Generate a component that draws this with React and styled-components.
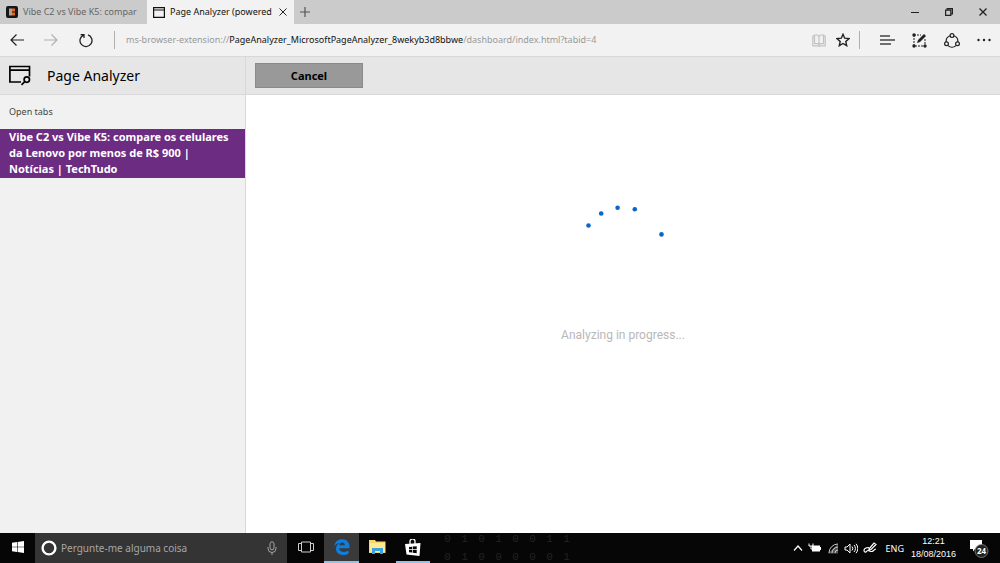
import React from "react";
import styled, { createGlobalStyle } from "styled-components";

const GlobalStyle = createGlobalStyle`
  * { box-sizing: border-box; }
  body { margin: 0; font-family: "Noto Sans", "Open Sans", sans-serif; color: #000; background: #fff; }
  button, input { font-family: inherit; margin: 0; border: 0; padding: 0; background: none; color: inherit; }
  svg { display: block; flex: none; }
`;

const Screen = styled.div`
  display: flex;
  flex-direction: column;
  min-height: 100vh;
`;

const TitleBar = styled.header`
  display: flex;
  height: 24px;
  background: #cbcbcb;
`;

const Tab = styled.div`
  display: flex;
  align-items: center;
  flex: none;
  width: 147px;
  padding: 0 6px;
  gap: 5px;
  background: ${(p) => (p.$active ? "#f2f2f2" : "transparent")};
  color: ${(p) => (p.$active ? "#111" : "#666")};
`;

const TabTitle = styled.span`
  flex: 1;
  white-space: nowrap;
  font-size: 9px;
  line-height: 16px;
`;

const IconButton = styled.button`
  display: flex;
  flex: none;
  align-items: center;
  justify-content: center;
  width: ${(p) => p.$w || 34}px;
  color: ${(p) => p.$color || "#222"};
`;

const Spacer = styled.div`
  flex: 1;
`;

const AddressBar = styled.nav`
  display: flex;
  align-items: center;
  height: 32px;
  padding-right: 8px;
  background: #f2f2f2;
`;

const Divider = styled.div`
  flex: none;
  width: 1px;
  height: 18px;
  margin: 0 ${(p) => p.$gap}px;
  background: #b0b0b0;
`;

const Address = styled.div`
  flex: 1;
  min-width: 0;
  white-space: nowrap;
  font-size: 9px;
  line-height: 16px;
  color: #999;
`;

const Host = styled.span`
  color: #111;
`;

const Page = styled.div`
  display: flex;
  flex: 1;
`;

const Sidebar = styled.aside`
  flex: none;
  width: 246px;
  border-right: 1px solid #d8d8d8;
  background: #f1f1f1;
`;

const PageBar = styled.div`
  display: flex;
  align-items: center;
  height: 39px;
  padding: 0 9px;
  gap: 16px;
  border-top: 1px solid #d8d8d8;
  border-bottom: 1px solid #d8d8d8;
  background: #e6e6e6;
`;

const Brand = styled.h1`
  margin: 0;
  font-size: 14px;
  line-height: 20px;
  font-weight: 400;
`;

const SectionLabel = styled.h2`
  margin: 0;
  padding: 9px 9px;
  font-size: 9px;
  line-height: 16px;
  font-weight: 400;
  color: #444;
`;

const OpenTab = styled.button`
  display: block;
  width: 100%;
  padding: 0 9px 1px;
  background: #6b2c82;
  color: #fff;
  font-size: 11px;
  line-height: 16px;
  font-weight: 700;
  text-align: left;
`;

const Main = styled.main`
  flex: 1;
  min-width: 0;
`;

const CancelButton = styled.button`
  width: 108px;
  height: 25px;
  background: #999;
  outline: 1px solid #8a8a8a;
  outline-offset: -1px;
  font-size: 11px;
  line-height: 16px;
  font-weight: 700;
`;

const Progress = styled.div`
  display: flex;
  flex-direction: column;
  align-items: center;
  padding-top: 110px;
  gap: 41px;
`;

const ProgressText = styled.p`
  margin: 0;
  font-family: Roboto, sans-serif;
  font-size: 12px;
  line-height: 18px;
  font-weight: 400;
  color: #b8b8b8;
`;

const Taskbar = styled.footer`
  display: flex;
  height: 30px;
  background: #060606;
  color: #fff;
`;

const Search = styled.label`
  display: flex;
  flex: none;
  align-items: center;
  width: 252px;
  padding: 0 10px 0 6px;
  gap: 4px;
  background: #343434;
`;

const SearchInput = styled.input`
  flex: 1;
  min-width: 0;
  outline: none;
  font-size: 10px;
  line-height: 16px;
  &::placeholder { color: #a6a6a6; opacity: 1; }
`;

const TaskButton = styled.button`
  display: flex;
  flex: none;
  align-items: center;
  justify-content: center;
  width: ${(p) => p.$w || 36}px;
  background: ${(p) => (p.$active ? "#3a3a3a" : "transparent")};
  border-bottom: 2px solid ${(p) => (p.$open ? "#8fc4e8" : "transparent")};
`;

const Bits = styled.div`
  display: grid;
  flex: none;
  grid-template-columns: repeat(8, 17px);
  align-content: space-between;
  margin-left: 9px;
  font-family: "Liberation Mono", monospace;
  font-size: 11px;
  line-height: 12px;
  text-align: center;
  color: #222;
`;

const Tray = styled.div`
  display: flex;
  align-items: center;
  gap: 5px;
  padding-right: 11px;
  font-size: 9px;
  line-height: 13px;
`;

const Language = styled.span`
  margin: 0 2px 0 4px;
`;

const Clock = styled.time`
  margin-right: 8px;
  font-family: "Liberation Sans", sans-serif;
  text-align: center;
`;

const Stroke = ({ w, h, sw = 1.2, children, ...rest }) => (
  <svg width={w} height={h} viewBox={`0 0 ${w} ${h}`} fill="none" stroke="currentColor" strokeWidth={sw} aria-hidden="true" {...rest}>
    {children}
  </svg>
);

const bits = "0101001101000001".split("");

const dots = [[7.5, 20.5], [20.2, 8.5], [36.6, 2.8], [53.8, 4.2], [80.5, 29.4]];

export default function App() {
  return (
    <Screen>
      <GlobalStyle />
      <TitleBar>
        <Tab>
          <svg width="12" height="12" viewBox="0 0 12 12" aria-hidden="true">
            <rect width="12" height="12" rx="2" fill="#171717" />
            <path d="M3 2.500h3v7H3z" fill="#a9a39d" />
            <path d="M6 2.500h3v3H6zM6 6.500h3v3H6z" fill="#e06a22" />
          </svg>
          <TabTitle>Vibe C2 vs Vibe K5: compar</TabTitle>
        </Tab>
        <Tab $active>
          <Stroke w={12} h={11}><path d="M.6.6h10.8v9.8H.6zM.6 3h10.8" /></Stroke>
          <TabTitle>Page Analyzer (powered</TabTitle>
          <IconButton $w={10} aria-label="Close tab">
            <Stroke w={8} h={8} sw={1}><path d="M.5.5l7 7M7.5.5l-7 7" /></Stroke>
          </IconButton>
        </Tab>
        <IconButton $w={22} $color="#555" aria-label="New tab">
          <Stroke w={10} h={10}><path d="M5 0v10M0 5h10" /></Stroke>
        </IconButton>
        <Spacer />
        <IconButton aria-label="Minimize"><Stroke w={8} h={8} sw={1}><path d="M0 4.500h8" /></Stroke></IconButton>
        <IconButton aria-label="Restore"><Stroke w={8} h={8} sw={1.2}><path d="M.6 2.200h5.200v5.200H.6zM2.200 2V.6h5.200v5.200H6" /></Stroke></IconButton>
        <IconButton aria-label="Close"><Stroke w={8} h={8} sw={1.3}><path d="M.5.5l7 7M7.500.5l-7 7" /></Stroke></IconButton>
      </TitleBar>

      <AddressBar>
        <IconButton $w={33} aria-label="Back"><Stroke w={14} h={12}><path d="M14 6H1M6.500.5L1 6l5.500 5.500" /></Stroke></IconButton>
        <IconButton $w={36} $color="#b0b0b0" aria-label="Forward"><Stroke w={14} h={12}><path d="M0 6h13M7.500.5L13 6l-5.500 5.500" /></Stroke></IconButton>
        <IconButton $w={34} aria-label="Refresh">
          <Stroke w={14} h={15} sw={1.3}><path d="M9 1.900a6 6 0 1 1-4.500.2M5 5V1.600H1.600" /></Stroke>
        </IconButton>
        <Divider $gap={11} />
        <Address>
          ms-browser-extension://<Host>PageAnalyzer_MicrosoftPageAnalyzer_8wekyb3d8bbwe</Host>/dashboard/index.html?tabid=4
        </Address>
        <IconButton $w={24} $color="#c2c2c2" aria-label="Reading view">
          <Stroke w={14} h={13} sw={1.2}><path d="M7 2.500v7.500M2.500 2.200H.8v9.600h5L7 12.600l1.200-.8h5V2.200h-1.700M2.500 1h3L7 2.500 8.500 1h3v8.700h-3L7 10.700 5.500 9.700h-3z" /></Stroke>
        </IconButton>
        <IconButton $w={24} aria-label="Favorites">
          <Stroke w={14} h={14} sw={1.4}><path d="M7 1.300l1.700 3.900 4.300.4-3.200 2.900.9 4.200L7 10.500l-3.700 2.200.9-4.200L1 5.600l4.300-.4z" /></Stroke>
        </IconButton>
        <Divider $gap={4} />
        <IconButton $w={46} $color="#444" aria-label="Hub"><Stroke w={15} h={10} sw={1.3}><path d="M0 1h10M0 5h15M0 9h11" /></Stroke></IconButton>
        <IconButton $w={18} aria-label="Web note">
          <Stroke w={15} h={15} sw={1}>
            <path d="M2 2h7M2 2v11h11V6" strokeDasharray="2 1" />
            <path d="M5 10l1-3 6-6 2 2-6 6z" fill="currentColor" stroke="none" />
            <circle cx="2" cy="2" r="1.700" fill="currentColor" stroke="none" />
            <circle cx="2" cy="13" r="1.700" fill="currentColor" stroke="none" />
            <circle cx="13" cy="13" r="1.700" fill="currentColor" stroke="none" />
          </Stroke>
        </IconButton>
        <IconButton $w={48} aria-label="Share">
          <Stroke w={16} h={15}>
            <circle cx="8" cy="2.500" r="1.900" /><circle cx="2.500" cy="10.800" r="1.900" /><circle cx="13.500" cy="10.800" r="1.900" />
            <path d="M6.200 2.800a5.800 5.800 0 0 0-4 6.200M9.800 2.800a5.800 5.800 0 0 1 4 6.200M4 12.600a6 6 0 0 0 8 0" />
          </Stroke>
        </IconButton>
        <IconButton $w={16} aria-label="More">
          <svg width="14" height="4" viewBox="0 0 14 4" fill="currentColor" aria-hidden="true"><circle cx="1.500" cy="2" r="1.200" /><circle cx="7" cy="2" r="1.200" /><circle cx="12.500" cy="2" r="1.200" /></svg>
        </IconButton>
      </AddressBar>

      <Page>
        <Sidebar>
          <PageBar>
            <Stroke w={22} h={21} sw={1.7}>
              <path d="M12 17H.9V1.500h19.600v10M.9 5.200h19.600" />
              <circle cx="17.800" cy="14.600" r="2.700" /><path d="M15.800 16.600l-3.300 3.300" />
            </Stroke>
            <Brand>Page Analyzer</Brand>
          </PageBar>
          <SectionLabel>Open tabs</SectionLabel>
          <OpenTab>Vibe C2 vs Vibe K5: compare os celulares da Lenovo por menos de R$ 900 | Notícias | TechTudo</OpenTab>
        </Sidebar>
        <Main>
          <PageBar>
            <CancelButton>Cancel</CancelButton>
          </PageBar>
          <Progress role="status">
            <svg width="84" height="80" viewBox="0 0 84 80" fill="#0a66cc" aria-hidden="true">
              {dots.map(([x, y]) => <circle key={x} cx={x} cy={y} r="2.300" />)}
            </svg>
            <ProgressText>Analyzing in progress...</ProgressText>
          </Progress>
        </Main>
      </Page>

      <Taskbar>
        <TaskButton $w={35} aria-label="Start">
          <svg width="12" height="12" viewBox="0 0 12 12" fill="#fff" aria-hidden="true"><path d="M0 1.700l5-.7v4.700H0zM5.600.9L12 0v5.700H5.600zM0 6.300h5V11l-5-.7zM5.600 6.300H12V12l-6.400-.9z" /></svg>
        </TaskButton>
        <Search>
          <Stroke w={16} h={16} sw={2.400} stroke="#fff"><circle cx="8" cy="8" r="6.400" /></Stroke>
          <SearchInput placeholder="Pergunte-me alguma coisa" aria-label="Pergunte-me alguma coisa" />
          <Stroke w={10} h={14} sw={1} stroke="#a6a6a6"><rect x="3" y=".8" width="4" height="8" rx="2" /><path d="M1 6v1.500a4 4 0 0 0 8 0V6M5 11.500V14" /></Stroke>
        </Search>
        <TaskButton $w={37} aria-label="Task view">
          <Stroke w={16} h={12} sw={1} stroke="#ccc"><path d="M3.500 1h9v10h-9zM3.500 2.500h-3v7h3M12.500 2.500h3v7h-3" /></Stroke>
        </TaskButton>
        <TaskButton $w={35} $active $open aria-label="Edge">
          <svg width="16" height="16" viewBox="0 0 16 16" fill="#0c7fe0" aria-hidden="true"><path d="M.3 7.200C.9 2.800 4 .2 8.100.2c4.700 0 7.500 3.300 7.500 7.600v1.400H5.200c.1 2.500 2.200 3.700 4.700 3.700 1.800 0 3.400-.5 4.600-1.300v3.200c-1.500.8-3.300 1.200-5.200 1.200C5 16 2 13.500 2 9.700 2 7.200 3.400 5.100 5.700 4 3.400 4.200 1.400 5.500.3 7.200zm5-.9h5.600c0-1.900-1-2.900-2.700-2.900S5.500 4.600 5.300 6.300z" /></svg>
        </TaskButton>
        <TaskButton $w={37} aria-label="File Explorer">
          <svg width="17" height="14" viewBox="0 0 17 14" aria-hidden="true"><path d="M0 0h6l1 1.500h9.500V13H0z" fill="#f7d66b" /><path d="M1 3h15v9H1z" fill="#ffe893" /><path d="M3 8h11v6h-3v-3H6v3H3z" fill="#36a3dc" /></svg>
        </TaskButton>
        <TaskButton $w={34} $open aria-label="Store">
          <svg width="16" height="17" viewBox="0 0 16 17" aria-hidden="true"><path d="M5 5V3a2.500 2.500 0 0 1 5-1v3" fill="none" stroke="#fff" strokeWidth="1.300" /><path d="M0 5l15.500-1-1 13L1.500 15.500z" fill="#fff" /><path d="M4 8l3-.3v2.500H4zM7.700 7.600l4-.4v3h-4zM4 11h3v2.600l-3-.3zM7.700 11h4v3.200l-4-.5z" fill="#060606" /></svg>
        </TaskButton>
        <Bits aria-hidden="true">{bits.map((b, i) => <span key={i}>{b}</span>)}</Bits>
        <Spacer />
        <Tray>
          <Stroke w={10} h={6}><path d="M1 5.500L5 1l4 4.500" /></Stroke>
          <svg width="14" height="10" viewBox="0 0 14 10" aria-hidden="true"><path d="M4 2.500h8v1.500h1v3h-1v1.500H4z" fill="#fff" /><path d="M1 .5v2.500h4V.5M3 3v3h2" fill="none" stroke="#fff" /></svg>
          <svg width="12" height="11" viewBox="0 0 12 11" aria-hidden="true"><path d="M1 10.500L11 1v9.500z" fill="#555" /><path d="M2 10a9 9 0 0 1 9-9M5 10a6 6 0 0 1 6-6M8 10a3 3 0 0 1 3-3" fill="none" stroke="#ccc" /></svg>
          <Stroke w={14} h={11} sw={1}><path d="M1 4h2l3-3v9L3 7H1zM8 3.500a3 3 0 0 1 0 4M10 2a5 5 0 0 1 0 7M12 .8a7 7 0 0 1 0 9.400" /></Stroke>
          <Stroke w={14} h={12}><path d="M6 7l5-6 2 1.500-5 5-2 .500zM6 5.500C2 5.500 1 7 1 8.500S3 11 4 9s4 2 6 0 3-2 3-2" /></Stroke>
          <Language>ENG</Language>
          <Clock>12:21<br />18/08/2016</Clock>
          <svg width="20" height="19" viewBox="0 0 20 19" aria-hidden="true">
            <path d="M1 1h12v9H6l-2 2.500V10H1z" fill="#fff" />
            <circle cx="12.500" cy="12" r="6.500" fill="#222" stroke="#888" strokeWidth=".8" />
            <text x="12.500" y="15" fontSize="8" fontWeight="700" textAnchor="middle" fill="#fff">24</text>
          </svg>
        </Tray>
      </Taskbar>
    </Screen>
  );
}
